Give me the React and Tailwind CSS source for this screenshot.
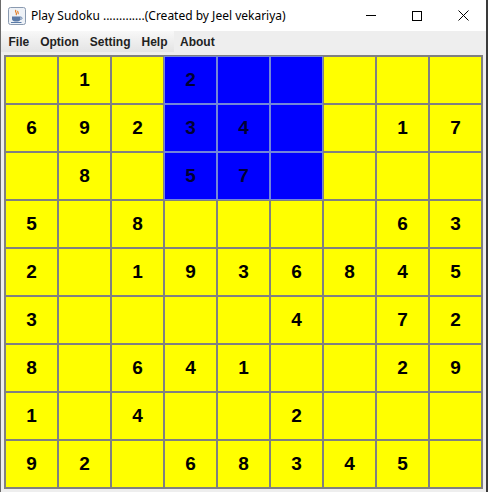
import React from "react";

const BOARD = [
  ["", "1", "", "2", "", "", "", "", ""],
  ["6", "9", "2", "3", "4", "", "", "1", "7"],
  ["", "8", "", "5", "7", "", "", "", ""],
  ["5", "", "8", "", "", "", "", "6", "3"],
  ["2", "", "1", "9", "3", "6", "8", "4", "5"],
  ["3", "", "", "", "", "4", "", "7", "2"],
  ["8", "", "6", "4", "1", "", "", "2", "9"],
  ["1", "", "4", "", "", "2", "", "", ""],
  ["9", "2", "", "6", "8", "3", "4", "5", ""],
];

const MENUS = ["File", "Option", "Setting", "Help"];

function isBlue(r, c) {
  return r < 3 && c >= 3 && c < 6;
}

function JavaIcon() {
  return (
    <svg width="18" height="18" viewBox="0 0 18 18">
      <rect x="0.5" y="0.5" width="17" height="17" rx="2" fill="#eef2f7" stroke="#8a9ab0" />
      <path d="M8 3 C6 5 10 6 8 8 M10 4 C9 5 11 6 10 7" stroke="#e07a20" strokeWidth="1.2" fill="none" />
      <path d="M4 9.5 H12.5 V12 C12.5 13.5 11 14.5 9.5 14.5 H7 C5.5 14.5 4 13.5 4 12 Z" fill="#5b7ba8" />
      <path d="M12.5 10 C14.5 10 14.5 12.5 12.5 12.5" stroke="#5b7ba8" strokeWidth="1" fill="none" />
      <path d="M3 15.5 H13.5" stroke="#5b7ba8" strokeWidth="1" />
    </svg>
  );
}

export default function App() {
  return (
    <div
      className="w-[488px] h-[492px] flex flex-col bg-[#eeeeee] border-l border-r-[2px] border-l-[#6b6b6b] border-r-[#3a3a3a] overflow-hidden"
      style={{ fontFamily: "'Liberation Sans', Arial, sans-serif" }}
    >
      {/* title bar */}
      <div className="h-[31px] bg-white flex items-center shrink-0">
        <div className="pl-[7px] pr-[5px] flex items-center">
          <JavaIcon />
        </div>
        <span
          className="text-[12px] text-black flex-1"
          style={{ fontFamily: "'Noto Sans', 'Open Sans', sans-serif" }}
        >
          Play Sudoku .............(Created by Jeel vekariya)
        </span>
        <div className="flex items-center h-full">
          <div className="w-[46px] h-full flex items-center justify-center">
            <div className="w-[10px] h-px bg-black" />
          </div>
          <div className="w-[46px] h-full flex items-center justify-center">
            <div className="w-[10px] h-[10px] border border-black" />
          </div>
          <div className="w-[46px] h-full flex items-center justify-center">
            <svg width="11" height="11" viewBox="0 0 11 11">
              <path d="M0.5 0.5 L10.5 10.5 M10.5 0.5 L0.5 10.5" stroke="#000" strokeWidth="1" />
            </svg>
          </div>
        </div>
      </div>

      {/* menu bar */}
      <div className="h-[21px] flex shrink-0 text-[12px] font-bold text-[#222]">
        <div className="flex items-center pl-[2px] pr-[1px] bg-gradient-to-b from-[#f8f8f8] to-[#e4e4e4]">
          {MENUS.map((m) => (
            <span key={m} className="px-[5.5px]">
              {m}
            </span>
          ))}
        </div>
        <div className="flex items-center px-[6px] bg-[#eeeeee]">About</div>
        <div className="flex-1 bg-[#eeeeee]" />
      </div>

      {/* board */}
      <div className="pt-[3px] pl-[3px]">
        <div className="grid grid-cols-[repeat(9,53px)] grid-rows-[repeat(9,48px)] border border-[#808080] w-fit">
          {BOARD.map((row, r) =>
            row.map((v, c) => (
              <div
                key={`${r}-${c}`}
                className={
                  isBlue(r, c)
                    ? "bg-[#0000ff] border border-[#7386d8] flex items-center justify-center text-[19px] font-bold text-[#000033]"
                    : "bg-[#ffff00] border border-[#808080] flex items-center justify-center text-[19px] font-bold text-black"
                }
              >
                {v}
              </div>
            ))
          )}
        </div>
      </div>
    </div>
  );
}
